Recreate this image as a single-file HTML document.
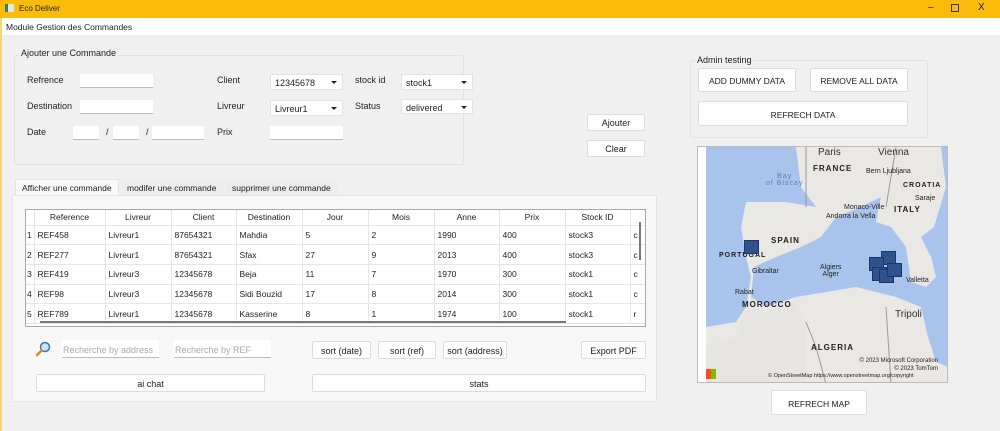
<!DOCTYPE html>
<html><head><meta charset="utf-8"><style>
*{box-sizing:border-box;margin:0;padding:0}
body{width:1000px;height:431px;overflow:hidden;background:#f0f0f0;font-family:"Liberation Sans",sans-serif;font-size:9px;color:#222;position:relative}
.a{position:absolute;white-space:nowrap}
.in{position:absolute;background:#fff;border-bottom:1px solid #bbb;white-space:nowrap;overflow:hidden}
.cb{position:absolute;background:#fff;border:1px solid #e2e2e2;padding:3px 0 0 4px;font-size:9px}
.cb:after{content:"";position:absolute;right:5px;top:6px;border:3px solid transparent;border-top:3px solid #222}
.btn{position:absolute;background:#fdfdfd;border:1px solid #dcdcdc;border-radius:2px;text-align:center;font-size:9px;color:#222;white-space:nowrap}
.grp{position:absolute;border:1px solid #e2e2e2;border-radius:3px}
table{border-collapse:collapse;font-size:8.5px}
td{border-right:1px solid #e6e6e6;border-bottom:1px solid #e6e6e6;height:19.7px;padding-left:3px;white-space:nowrap;overflow:hidden}
tr.h td{height:15px;text-align:center;padding-left:0}
</style></head><body>
<div class="a" style="left:0;top:0;width:1000px;height:18px;background:#fbbb0a"></div>
<div class="a" style="left:5px;top:4px;width:9px;height:8px;background:#dfe8e4;border-left:3px solid #3a7a6a"></div>
<div class="a" style="left:19px;top:4px;font-size:8px">Eco Deliver</div>
<div class="a" style="left:928px;top:2px;font-size:10px">–</div>
<div class="a" style="left:951px;top:4px;width:8px;height:8px;border:1px solid #333"></div>
<div class="a" style="left:978px;top:2px;font-size:10px">X</div>
<div class="a" style="left:0;top:18px;width:1000px;height:17px;background:#fff"></div>
<div class="a" style="left:6px;top:22px;font-size:8.5px">Module Gestion des Commandes</div>
<div class="a" style="left:0;top:18px;width:2px;height:413px;background:#f5d77a"></div>

<div class="grp" style="left:14px;top:55px;width:450px;height:110px"></div>
<div class="a" style="left:19px;top:48px;background:#f0f0f0;padding:0 2px">Ajouter une Commande</div>
<div class="a" style="left:27px;top:75px">Refrence</div>
<div class="a" style="left:27px;top:101px">Destination</div>
<div class="a" style="left:27px;top:127px">Date</div>
<div class="in" style="left:80px;top:74px;width:73px;height:14px"></div>
<div class="in" style="left:80px;top:100px;width:73px;height:14px"></div>
<div class="in" style="left:73px;top:126px;width:26px;height:14px"></div>
<div class="a" style="left:106px;top:127px">/</div>
<div class="in" style="left:113px;top:126px;width:26px;height:14px"></div>
<div class="a" style="left:146px;top:127px">/</div>
<div class="in" style="left:152px;top:126px;width:52px;height:14px"></div>
<div class="a" style="left:217px;top:75px">Client</div>
<div class="a" style="left:217px;top:101px">Livreur</div>
<div class="a" style="left:217px;top:127px">Prix</div>
<div class="cb" style="left:270px;top:74px;width:73px;height:16px">12345678</div>
<div class="cb" style="left:270px;top:100px;width:73px;height:16px">Livreur1</div>
<div class="in" style="left:270px;top:126px;width:73px;height:14px"></div>
<div class="a" style="left:355px;top:75px">stock id</div>
<div class="a" style="left:355px;top:101px">Status</div>
<div class="cb" style="left:401px;top:74px;width:72px;height:16px">stock1</div>
<div class="cb" style="left:401px;top:99px;width:72px;height:15px">delivered</div>
<div class="btn" style="left:587px;top:114px;width:58px;height:17px;padding-top:3px">Ajouter</div>
<div class="btn" style="left:587px;top:140px;width:58px;height:17px;padding-top:3px">Clear</div>

<div class="a" style="left:15px;top:179px;width:104px;height:17px;background:#f8f8f8;border:1px solid #e4e4e4;border-bottom:none;padding:3px 0 0 6px;font-size:8.5px">Afficher une commande</div>
<div class="a" style="left:121px;top:181px;width:103px;height:14px;background:#ececec;padding:2px 0 0 6px;font-size:8.5px">modifer une commande</div>
<div class="a" style="left:226px;top:181px;width:112px;height:14px;background:#ececec;padding:2px 0 0 6px;font-size:8.5px">supprimer une commande</div>
<div class="a" style="left:12px;top:195px;width:645px;height:207px;background:#f8f8f8;border:1px solid #e4e4e4"></div>

<div class="a" style="left:25px;top:209px;width:621px;height:118px;background:#fff;border:1px solid #a8a8a8;overflow:hidden">
<table style="width:620px;table-layout:fixed">
<colgroup><col style="width:8px"><col style="width:71px"><col style="width:66px"><col style="width:65px"><col style="width:66px"><col style="width:66px"><col style="width:66px"><col style="width:65px"><col style="width:66px"><col style="width:65px"><col style="width:16px"></colgroup>
<tr class="h"><td></td><td>Reference</td><td>Livreur</td><td>Client</td><td>Destination</td><td>Jour</td><td>Mois</td><td>Anne</td><td>Prix</td><td>Stock ID</td><td></td></tr>
<tr><td style="padding-left:1px">1</td><td>REF458</td><td>Livreur1</td><td>87654321</td><td>Mahdia</td><td>5</td><td>2</td><td>1990</td><td>400</td><td>stock3</td><td>c</td></tr>
<tr><td style="padding-left:1px">2</td><td>REF277</td><td>Livreur1</td><td>87654321</td><td>Sfax</td><td>27</td><td>9</td><td>2013</td><td>400</td><td>stock3</td><td>c</td></tr>
<tr><td style="padding-left:1px">3</td><td>REF419</td><td>Livreur3</td><td>12345678</td><td>Beja</td><td>11</td><td>7</td><td>1970</td><td>300</td><td>stock1</td><td>c</td></tr>
<tr><td style="padding-left:1px">4</td><td>REF98</td><td>Livreur3</td><td>12345678</td><td>Sidi Bouzid</td><td>17</td><td>8</td><td>2014</td><td>300</td><td>stock1</td><td>c</td></tr>
<tr><td style="padding-left:1px">5</td><td>REF789</td><td>Livreur1</td><td>12345678</td><td>Kasserine</td><td>8</td><td>1</td><td>1974</td><td>100</td><td>stock1</td><td>r</td></tr>
</table>
<div class="a" style="left:14px;top:111px;width:526px;height:2px;background:#777"></div>
<div class="a" style="left:613px;top:12px;width:2px;height:38px;background:#777"></div>
</div>

<svg class="a" style="left:35px;top:341px" width="16" height="16"><circle cx="10" cy="6" r="4.5" fill="#cfe3f5" stroke="#3a76b8" stroke-width="1.5"/><line x1="6.5" y1="9.5" x2="2" y2="14" stroke="#e08a1e" stroke-width="2.5" stroke-linecap="round"/></svg>
<div class="in" style="left:62px;top:340px;width:97px;height:18px;color:#aaa;padding:5px 0 0 1px">Recherche by address</div>
<div class="in" style="left:174px;top:340px;width:97px;height:18px;color:#aaa;padding:5px 0 0 1px">Recherche by REF</div>
<div class="btn" style="left:312px;top:341px;width:59px;height:18px;padding-top:4px">sort (date)</div>
<div class="btn" style="left:378px;top:341px;width:58px;height:18px;padding-top:4px">sort (ref)</div>
<div class="btn" style="left:443px;top:341px;width:64px;height:18px;padding-top:4px">sort (address)</div>
<div class="btn" style="left:581px;top:341px;width:65px;height:18px;padding-top:4px">Export PDF</div>
<div class="btn" style="left:36px;top:374px;width:229px;height:18px;padding-top:4px">ai chat</div>
<div class="btn" style="left:312px;top:374px;width:334px;height:18px;padding-top:4px">stats</div>

<div class="grp" style="left:690px;top:60px;width:238px;height:78px"></div>
<div class="a" style="left:696px;top:55px;background:#f0f0f0;padding:0 1px">Admin testing</div>
<div class="btn" style="left:698px;top:68px;width:98px;height:24px;padding-top:7px;font-size:8.5px">ADD DUMMY DATA</div>
<div class="btn" style="left:810px;top:68px;width:98px;height:24px;padding-top:7px;font-size:8.5px">REMOVE ALL DATA</div>
<div class="btn" style="left:698px;top:101px;width:210px;height:25px;padding-top:8px;font-size:8.5px">REFRECH DATA</div>

<div class="a" style="left:697px;top:146px;width:251px;height:237px;border:1px solid #bbb;background:#fff;overflow:hidden">
<svg width="251" height="237" style="position:absolute;left:8px;top:0">
<rect width="251" height="237" fill="#e9e8e4"/>
<path d="M0 0 H90 L95 40 L110 60 L130 70 L110 60 L80 55 L40 55 L35 80 L40 110 L45 130 L40 160 L30 175 L0 180 Z" fill="#a9c4ec"/>
<path d="M130 70 L150 62 L175 50 L170 75 L185 80 L200 100 L215 120 L230 130 L225 110 L215 90 L228 80 L240 40 L235 0 H243 V220 L230 215 L222 190 L215 160 L190 150 L170 145 L150 140 L120 145 L90 150 L60 160 L45 150 L48 120 L70 110 L95 100 L115 90 Z" fill="#a9c4ec"/>
<path d="M200 100 L225 110 L230 130 L220 140 L205 135 Z" fill="#e9e8e4"/>
<path d="M40 160 L60 165 L90 155 L100 175 L100 237 L0 237 L0 200 L30 190 Z" fill="#e6e5e1"/>
<path d="M100 0 V60 M190 0 L180 60 M100 175 L110 200 L120 237 M180 160 L185 237" stroke="#999" fill="none"/>
</svg>
<div class="a" style="left:120px;top:0px;font-size:10px;color:#333">Paris</div>
<div class="a" style="left:115px;top:17px;font-size:8px;font-weight:bold;letter-spacing:1px">FRANCE</div>
<div class="a" style="left:180px;top:0px;font-size:10px;color:#333">Vienna</div>
<div class="a" style="left:168px;top:21px;font-size:7px">Bern Ljubljana</div>
<div class="a" style="left:205px;top:35px;font-size:7px;font-weight:bold;letter-spacing:1px">CROATIA</div>
<div class="a" style="left:217px;top:48px;font-size:7px">Saraje</div>
<div class="a" style="left:68px;top:26px;font-size:7px;color:#5a7bb0;text-align:center;letter-spacing:1px">Bay<br>of Biscay</div>
<div class="a" style="left:146px;top:57px;font-size:7px">Monaco-Ville</div>
<div class="a" style="left:196px;top:58px;font-size:8px;font-weight:bold;letter-spacing:1px">ITALY</div>
<div class="a" style="left:128px;top:66px;font-size:7px">Andorra la Vella</div>
<div class="a" style="left:73px;top:89px;font-size:8px;font-weight:bold;letter-spacing:1px">SPAIN</div>
<div class="a" style="left:21px;top:105px;font-size:7px;font-weight:bold;letter-spacing:1px">PORTUGAL</div>
<div class="a" style="left:54px;top:121px;font-size:7px">Gibraltar</div>
<div class="a" style="left:122px;top:117px;font-size:7px;text-align:center">Algiers<br>Alger</div>
<div class="a" style="left:208px;top:130px;font-size:7px">Valletta</div>
<div class="a" style="left:37px;top:142px;font-size:7px">Rabat</div>
<div class="a" style="left:44px;top:153px;font-size:8px;font-weight:bold;letter-spacing:1px">MOROCCO</div>
<div class="a" style="left:197px;top:162px;font-size:10px;color:#333">Tripoli</div>
<div class="a" style="left:113px;top:196px;font-size:8px;font-weight:bold;letter-spacing:1px">ALGERIA</div>
<div class="a" style="left:155px;top:210px;font-size:6px;text-align:right;width:85px;line-height:8px">© 2023 Microsoft Corporation<br>© 2023 TomTom</div>
<div class="a" style="left:70px;top:226px;font-size:5.5px">© OpenStreetMap https://www.openstreetmap.org/copyright</div>
<div class="a" style="left:8px;top:222px;width:10px;height:10px;background:linear-gradient(90deg,#f25022 50%,#7fba00 50%)"></div>
<div class="a" style="left:46px;top:93px;width:15px;height:14px;background:#2f528f;border:1px solid #1d3566"></div>
<div class="a" style="left:183px;top:104px;width:15px;height:14px;background:#2f528f;border:1px solid #1d3566"></div>
<div class="a" style="left:171px;top:110px;width:15px;height:14px;background:#2f528f;border:1px solid #1d3566"></div>
<div class="a" style="left:174px;top:120px;width:15px;height:14px;background:#2f528f;border:1px solid #1d3566"></div>
<div class="a" style="left:181px;top:122px;width:15px;height:14px;background:#2f528f;border:1px solid #1d3566"></div>
<div class="a" style="left:189px;top:116px;width:15px;height:14px;background:#2f528f;border:1px solid #1d3566"></div>
</div>
<div class="btn" style="left:771px;top:390px;width:96px;height:25px;padding-top:8px;font-size:8.5px">REFRECH MAP</div>
</body></html>
